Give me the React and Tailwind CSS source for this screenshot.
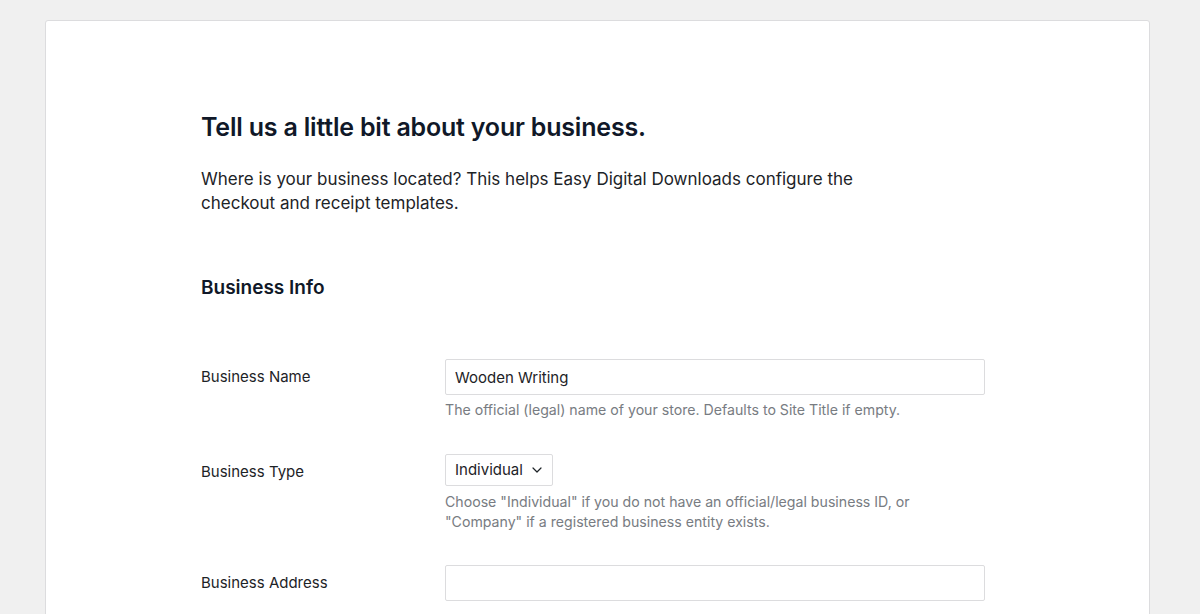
import { ChevronDown } from 'lucide-react'

const font = { fontFamily: 'Inter, "Noto Sans", sans-serif' }

const Row = ({ label, children, className = '' }) => (
    <div className={`flex ${className}`}>
        <div className="w-[244px] shrink-0 pt-[7px] text-[15px] leading-[22px] text-[#1d2327]">
            {label}
        </div>
        <div className="flex-1">{children}</div>
    </div>
)

export default function App() {
    return (
        <div className="h-screen bg-[#f0f0f0] pt-5 pl-[45px] pr-[50px] overflow-hidden" style={font}>
            <div className="h-[700px] bg-white border border-[#dcdcde] rounded-[3px] pl-[155px] pt-[91px]">
                <h1 className="text-[25px] leading-[30px] font-semibold text-[#101828] tracking-[-0.2px]">
                    Tell us a little bit about your business.
                </h1>
                <p className="mt-[25px] w-[680px] text-[17px] leading-[24px] text-[#1d2327]">
                    Where is your business located? This helps Easy Digital Downloads configure the checkout and receipt templates.
                </p>

                <h2 className="mt-[60px] text-[19px] leading-[26px] font-semibold text-[#101828]">
                    Business Info
                </h2>

                <div className="mt-[58px] w-[785px]">
                    <Row label="Business Name">
                        <input
                            defaultValue="Wooden Writing"
                            className="w-[540px] h-[36px] border border-[#dcdcde] rounded-[2px] px-[9px] text-[15px] text-[#1d2327] outline-none"
                            style={font}
                        />
                        <p className="mt-[5px] text-[14.15px] leading-[20px] text-[#787c82]">
                            The official (legal) name of your store. Defaults to Site Title if empty.
                        </p>
                    </Row>

                    <Row label="Business Type" className="mt-[34px]">
                        <div className="inline-flex items-center gap-[6px] h-[32px] border border-[#dcdcde] rounded-[2px] pl-[9px] pr-[7px] text-[15px] text-[#1d2327]">
                            Individual
                            <ChevronDown size={16} strokeWidth={1.8} />
                        </div>
                        <p className="mt-[6px] w-[480px] text-[14.15px] leading-[20px] text-[#787c82]">
                            Choose "Individual" if you do not have an official/legal business ID, or "Company" if a registered business entity exists.
                        </p>
                    </Row>

                    <Row label="Business Address" className="mt-[33px]">
                        <input
                            className="w-[540px] h-[36px] border border-[#dcdcde] rounded-[2px] px-[9px] text-[15px] outline-none"
                            style={font}
                        />
                    </Row>
                </div>
            </div>
        </div>
    )
}
